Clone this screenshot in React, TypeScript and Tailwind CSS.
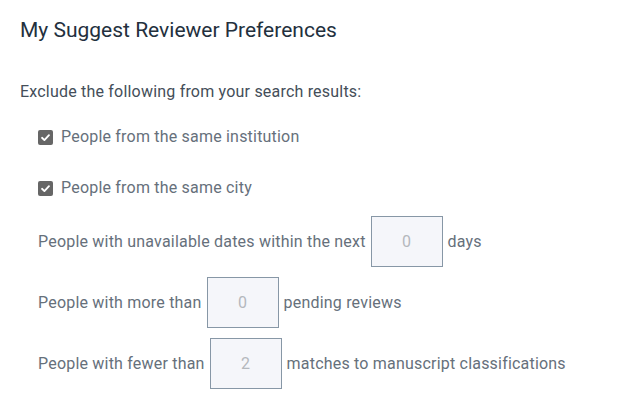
import React from "react";

function Check() {
  return (
    <span className="inline-flex h-[15px] w-[15px] shrink-0 items-center justify-center rounded-[2px] bg-[#666666]">
      <svg width="11" height="11" viewBox="0 0 12 12" fill="none">
        <path d="M2.2 6.3 L4.8 8.8 L9.8 3.4" stroke="#ffffff" strokeWidth="2" strokeLinecap="round" strokeLinejoin="round" />
      </svg>
    </span>
  );
}

function Box({ v }: { v: string }) {
  return (
    <div className="mx-[5px] flex h-[51px] w-[72px] items-center justify-center border border-[#8797a6] bg-[#f5f6fa] text-[16px] text-[#b4b8bd]">
      {v}
    </div>
  );
}

export default function App() {
  return (
    <div
      className="min-h-[415px] w-[624px] bg-white pl-[20px] pt-[18px] text-[#66707b]"
      style={{ fontFamily: "Roboto, 'Liberation Sans', sans-serif" }}
    >
      <div className="text-[21px] leading-[24px] text-[#23303d]">My Suggest Reviewer Preferences</div>
      <div className="mt-[40px] text-[16px] leading-[20px] tracking-[0.2px] text-[#444e59]">Exclude the following from your search results:</div>
      <div className="ml-[18px] mt-[25px] flex h-[20px] items-center gap-[8px] text-[16px] tracking-[0.2px]">
        <Check />
        <span>People from the same institution</span>
      </div>
      <div className="ml-[18px] mt-[31px] flex h-[20px] items-center gap-[8px] text-[16px] tracking-[0.2px]">
        <Check />
        <span>People from the same city</span>
      </div>
      <div className="ml-[18px] mt-[18px] flex flex-col gap-[10px] text-[16px] tracking-[0.2px]">
        <div className="flex items-center">
          <span>People with unavailable dates within the next</span>
          <Box v="0" />
          <span>days</span>
        </div>
        <div className="flex items-center">
          <span>People with more than</span>
          <Box v="0" />
          <span>pending reviews</span>
        </div>
        <div className="flex items-center">
          <span>People with fewer than</span>
          <Box v="2" />
          <span>matches to manuscript classifications</span>
        </div>
      </div>
    </div>
  );
}
